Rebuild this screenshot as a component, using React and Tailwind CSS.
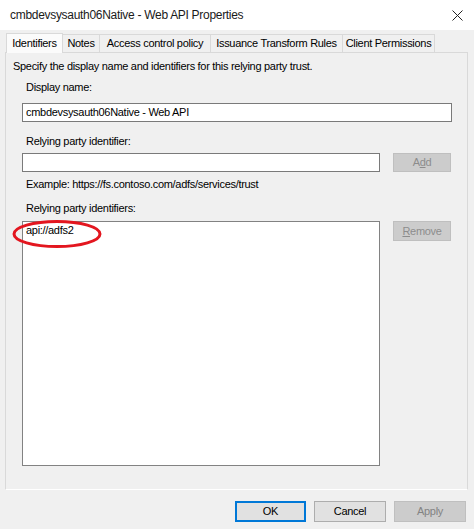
export default function App() {
  const tabs = [
    { label: 'Identifiers', w: 'w-[57px]', active: true },
    { label: 'Notes', w: 'w-[37px]' },
    { label: 'Access control policy', w: 'w-[111px]' },
    { label: 'Issuance Transform Rules', w: 'w-[132px]' },
    { label: 'Client Permissions', w: 'w-[92px]' },
  ]

  return (
    <div className="w-[474px] h-[529px] bg-[#f0f0f0] flex flex-col font-['Liberation_Sans',Arial,sans-serif] text-[11px] leading-[13px] tracking-[-0.3px] text-black">
      {/* title bar */}
      <div className="h-[30px] bg-white flex items-center justify-between pl-[10px] pr-[11px] shrink-0">
        <span className="text-[12px] text-[#1a1a1a]">cmbdevsysauth06Native - Web API Properties</span>
        <svg width="11" height="11" viewBox="0 0 11 11" stroke="#222" strokeWidth="1">
          <line x1="0.5" y1="0.5" x2="10.5" y2="10.5" />
          <line x1="10.5" y1="0.5" x2="0.5" y2="10.5" />
        </svg>
      </div>

      {/* tabs */}
      <div className="flex items-end h-[22px] pl-[6px] shrink-0">
        {tabs.map((t) =>
          t.active ? (
            <div
              key={t.label}
              className={`${t.w} h-[20px] mb-[-1px] z-10 bg-[#fbfbfb] border border-b-0 border-[#d9d9d9] flex items-center justify-center whitespace-nowrap`}
            >
              {t.label}
            </div>
          ) : (
            <div
              key={t.label}
              className={`${t.w} h-[18px] bg-[#f0f0f0] border border-b-0 border-l-0 border-[#d9d9d9] flex items-center justify-center whitespace-nowrap`}
            >
              {t.label}
            </div>
          )
        )}
      </div>

      {/* tab page */}
      <div className="ml-[5px] w-[463px] h-[438px] border border-[#d9d9d9] border-b-white bg-[#f0f0f0] pt-[7px] pl-[7px] shrink-0">
        <p>Specify the display name and identifiers for this relying party trust.</p>

        <div className="pl-[9px] pr-[15px] flex flex-col">
          <label className="mt-[8px] pl-[4px]">Display name:</label>
          <div className="mt-[9px] h-[19px] border border-[#7a7a7a] bg-white flex items-center pl-[3px]">
            cmbdevsysauth06Native - Web API
          </div>

          <label className="mt-[13px] pl-[4px]">Relying party identifier:</label>
          <div className="mt-[5px] flex gap-[13px]">
            <div className="w-[358px] h-[19px] border border-[#7a7a7a] bg-white" />
            <button className="w-[58px] h-[19px] border border-[#bfbfbf] bg-[#cccccc] text-[#8c8c8c]">
              A<span className="underline">d</span>d
            </button>
          </div>

          <p className="mt-[6px] pl-[4px]">Example: https://fs.contoso.com/adfs/services/trust</p>

          <label className="mt-[11px] pl-[4px]">Relying party identifiers:</label>
          <div className="mt-[6px] flex gap-[13px]">
            <div className="relative w-[358px] h-[245px] border border-[#828282] bg-white pl-[3px] pt-[2px]">
              api://adfs2
              <svg
                className="absolute left-[-11px] top-[-3px]"
                width="92"
                height="30"
                viewBox="0 0 92 30"
              >
                <ellipse cx="45" cy="15" rx="43" ry="12.5" fill="none" stroke="#e3161f" strokeWidth="3" />
              </svg>
            </div>
            <button className="w-[58px] h-[20px] self-start border border-[#bfbfbf] bg-[#cccccc] text-[#8c8c8c]">
              <span className="underline">R</span>emove
            </button>
          </div>
        </div>
      </div>

      {/* dialog buttons */}
      <div className="mt-[11px] flex justify-end gap-[8px] pr-[8px]">
        <button className="w-[71px] h-[21px] border-2 border-[#0078d7] bg-[#e1e1e1]">OK</button>
        <button className="w-[72px] h-[21px] border border-[#adadad] bg-[#e1e1e1]">Cancel</button>
        <button className="w-[72px] h-[21px] border border-[#bfbfbf] bg-[#cccccc] text-[#838383]">Apply</button>
      </div>
    </div>
  )
}
